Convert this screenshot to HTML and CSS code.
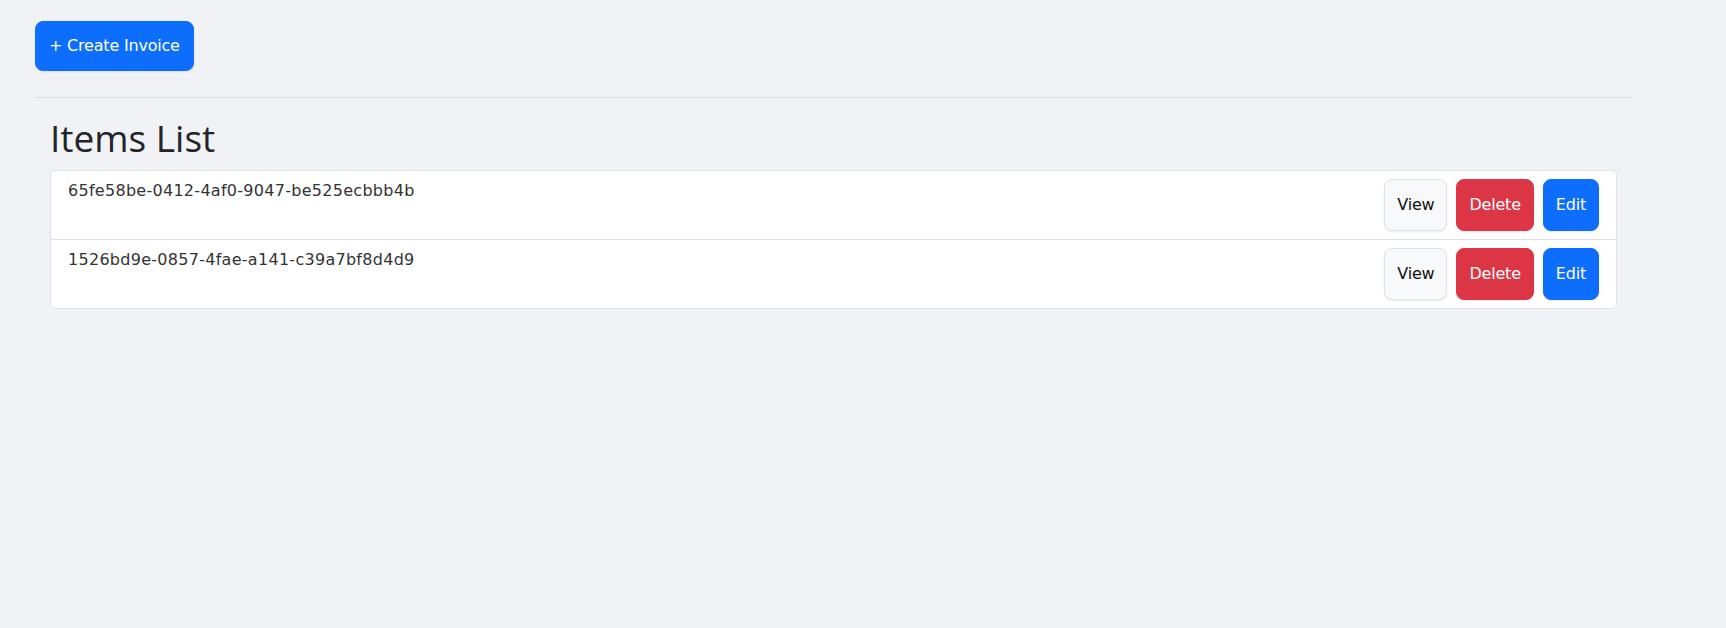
FILE: index.html
```html
<!DOCTYPE html>
<html lang="en">
<head>
<meta charset="utf-8">
<title>Items List</title>
<link rel="stylesheet" href="styles.css">
</head>
<body>
<div class="page">
  <div class="toolbar">
    <button class="btn btn-primary btn-create">+ Create Invoice</button>
  </div>
  <hr class="divider">
  <section class="items">
    <h1 class="items-title">Items List</h1>
    <ul class="list">
      <li class="list-item">
        <span class="item-id">65fe58be-0412-4af0-9047-be525ecbbb4b</span>
        <div class="actions">
          <button class="btn btn-light">View</button>
          <button class="btn btn-danger">Delete</button>
          <button class="btn btn-primary">Edit</button>
        </div>
      </li>
      <li class="list-item">
        <span class="item-id">1526bd9e-0857-4fae-a141-c39a7bf8d4d9</span>
        <div class="actions">
          <button class="btn btn-light">View</button>
          <button class="btn btn-danger">Delete</button>
          <button class="btn btn-primary">Edit</button>
        </div>
      </li>
    </ul>
  </section>
</div>
</body>
</html>
```

FILE: styles.css
```css
* { box-sizing: border-box; }

html, body {
  margin: 0;
  background: #f1f2f6;
}

body {
  font-family: "DejaVu Sans", "Open Sans", sans-serif;
  font-size: 16px;
  line-height: 24px;
  color: #212529;
}

.page {
  width: 1632px;
  padding: 21px 0 0 35px;
}

.toolbar {
  display: flex;
}

.btn {
  font-family: inherit;
  font-size: 16px;
  line-height: 24px;
  letter-spacing: -0.2px;
  height: 50px;
  padding: 12px 13px;
  border: 1px solid transparent;
  border-radius: 8px;
  cursor: pointer;
  box-shadow: 0 1px 2px rgba(0, 0, 0, 0.08);
}

.btn-primary {
  background: #0d6efd;
  border-color: #0d6efd;
  color: #fff;
}

.btn-danger {
  background: #dc3545;
  border-color: #dc3545;
  color: #fff;
}

.btn-light {
  background: #f8f9fa;
  border-color: #dfe1e4;
  color: #111;
}

.divider {
  margin: 26px 0 16px;
  border: 0;
  border-top: 1px solid #dcdde2;
  height: 0;
}

.items {
  padding: 0 15px;
}

.items-title {
  margin: 0 0 8px;
  font-family: "Open Sans", "DejaVu Sans", sans-serif;
  font-size: 37px;
  line-height: 48px;
  font-weight: 400;
  color: #212529;
}

.list {
  list-style: none;
  margin: 0;
  padding: 0;
  background: #fff;
  border: 1px solid #dee2e6;
  border-radius: 5px;
}

.list-item {
  display: flex;
  justify-content: space-between;
  align-items: flex-start;
  padding: 8px 17px;
}

.list-item + .list-item {
  border-top: 1px solid #dee2e6;
}

.list-item .btn {
  height: 52px;
  padding: 13px 12px;
}

.item-id {
  color: #333;
  letter-spacing: 0.28px;
}

.actions {
  display: flex;
  gap: 9px;
}
```
